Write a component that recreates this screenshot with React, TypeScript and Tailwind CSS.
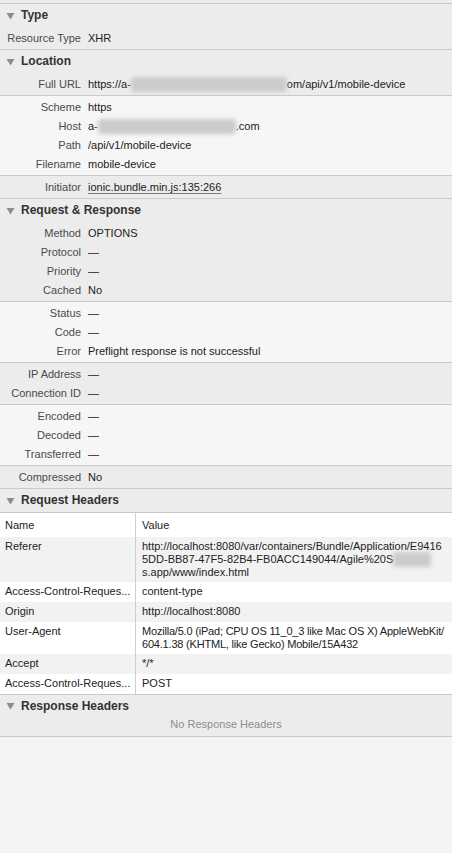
import type { ReactNode } from 'react'

type Row = { label: string; value: ReactNode }

function Blur({ w }: { w: number }) {
  return (
    <span
      className="inline-block h-[15px] align-middle bg-[#cbcbcb] blur-[2px] rounded-sm"
      style={{ width: w }}
    />
  )
}

function Triangle() {
  return (
    <svg width="9" height="8" viewBox="0 0 9 8" className="mr-[6px]">
      <path d="M0.5 1 L8.5 1 L4.5 7.5 Z" fill="#8c8c8c" />
    </svg>
  )
}

function Header({ title, h = 'h-[23px]' }: { title: string; h?: string }) {
  return (
    <div className={`${h} flex items-center pl-[6px] text-[12px] font-bold text-[#333]`}>
      <Triangle />
      {title}
    </div>
  )
}

function Group({ rows, light }: { rows: Row[]; light?: boolean }) {
  return (
    <div
      className={`pt-[2px] pb-[1px] border-b border-[#c9c9c9] ${
        light ? 'bg-[#f6f6f6]' : 'bg-[#ececec]'
      }`}
    >
      {rows.map(({ label, value }) => (
        <div key={label} className="h-[19px] flex items-center">
          <div className="w-[81px] text-right text-[#4a4a4a] whitespace-nowrap">{label}</div>
          <div className="pl-[7px] text-[#222] whitespace-nowrap flex items-center">{value}</div>
        </div>
      ))}
    </div>
  )
}

const headerRows: { name: string; lines: ReactNode[]; tight?: boolean }[] = [
  {
    name: 'Referer',
    lines: [
      'http://localhost:8080/var/containers/Bundle/Application/E9416',
      <>
        5DD-BB87-47F5-82B4-FB0ACC149044/Agile%20S
        <Blur w={38} />
      </>,
      's.app/www/index.html'
    ]
  },
  { name: 'Access-Control-Reques...', lines: ['content-type'] },
  { name: 'Origin', lines: ['http://localhost:8080'] },
  {
    name: 'User-Agent',
    tight: true,
    lines: [
      'Mozilla/5.0 (iPad; CPU OS 11_0_3 like Mac OS X) AppleWebKit/',
      '604.1.38 (KHTML, like Gecko) Mobile/15A432'
    ]
  },
  { name: 'Accept', lines: ['*/*'] },
  { name: 'Access-Control-Reques...', lines: ['POST'] }
]

export default function App() {
  return (
    <div className="w-[452px] min-h-[853px] bg-[#f4f4f4] font-['Liberation_Sans',Arial,sans-serif] text-[11px] leading-[13px]">
      <div className="bg-[#ececec] pt-[3px]">
        <div className="border-t border-[#c9c9c9]" />

        {/* Type */}
        <Header title="Type" />
        <Group rows={[{ label: 'Resource Type', value: 'XHR' }]} />

        {/* Location */}
        <Header title="Location" />
        <Group
          rows={[
            {
              label: 'Full URL',
              value: (
                <>
                  https://a-
                  <Blur w={156} />
                  om/api/v1/mobile-device
                </>
              )
            }
          ]}
        />
        <Group
          light
          rows={[
            { label: 'Scheme', value: 'https' },
            {
              label: 'Host',
              value: (
                <>
                  a-
                  <Blur w={138} />
                  .com
                </>
              )
            },
            { label: 'Path', value: '/api/v1/mobile-device' },
            { label: 'Filename', value: 'mobile-device' }
          ]}
        />
        <Group
          rows={[
            {
              label: 'Initiator',
              value: (
                <span className="underline decoration-[#777] underline-offset-2">
                  ionic.bundle.min.js:135:266
                </span>
              )
            }
          ]}
        />

        {/* Request & Response */}
        <Header title="Request & Response" />
        <Group
          rows={[
            { label: 'Method', value: 'OPTIONS' },
            { label: 'Protocol', value: '—' },
            { label: 'Priority', value: '—' },
            { label: 'Cached', value: 'No' }
          ]}
        />
        <Group
          light
          rows={[
            { label: 'Status', value: '—' },
            { label: 'Code', value: '—' },
            { label: 'Error', value: 'Preflight response is not successful' }
          ]}
        />
        <Group
          rows={[
            { label: 'IP Address', value: '—' },
            { label: 'Connection ID', value: '—' }
          ]}
        />
        <Group
          light
          rows={[
            { label: 'Encoded', value: '—' },
            { label: 'Decoded', value: '—' },
            { label: 'Transferred', value: '—' }
          ]}
        />
        <Group rows={[{ label: 'Compressed', value: 'No' }]} />

        {/* Request Headers */}
        <Header title="Request Headers" />
        <div className="border-t border-b border-[#c9c9c9] text-[#222]">
          <div className="flex bg-white h-[24px]">
            <div className="w-[136px] shrink-0 border-r border-[#cfcfcf] pl-[5px] flex items-center">Name</div>
            <div className="pl-[6px] flex items-center">Value</div>
          </div>
          {headerRows.map(({ name, lines, tight }, i) => (
            <div
              key={i}
              className={`flex min-h-[20px] ${i % 2 === 0 ? 'bg-[#f2f2f2]' : 'bg-white'}`}
            >
              <div className="w-[136px] shrink-0 border-r border-[#cfcfcf] pl-[5px] py-[3px] whitespace-nowrap">
                {name}
              </div>
              <div className={`pl-[6px] py-[3px] ${tight ? 'tracking-[-0.2px]' : ''}`}>
                {lines.map((l, j) => (
                  <div key={j} className="whitespace-nowrap flex items-center h-[13px]">
                    {l}
                  </div>
                ))}
              </div>
            </div>
          ))}
        </div>

        {/* Response Headers */}
        <Header title="Response Headers" h="h-[22px]" />
        <div className="h-[20px] pt-[1px] text-center text-[#8e8e8e] border-b border-[#c9c9c9]">
          No Response Headers
        </div>
      </div>
    </div>
  )
}
